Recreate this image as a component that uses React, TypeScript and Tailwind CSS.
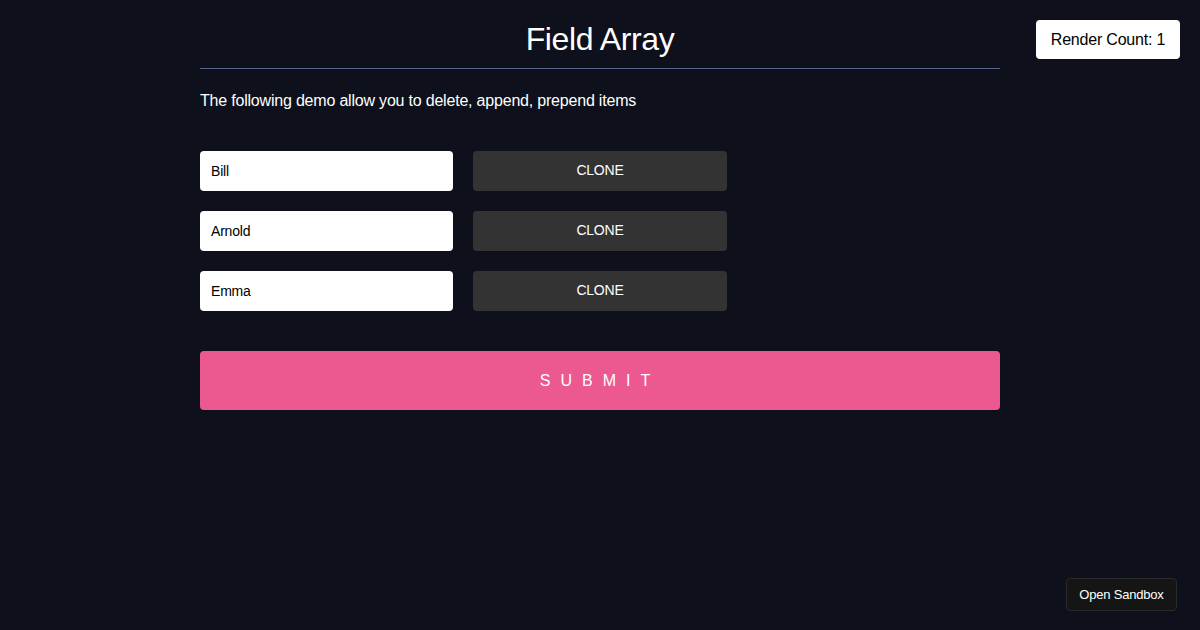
import React from "react";

export default function App() {
  const names = ["Bill", "Arnold", "Emma"];
  return (
    <div
      className="relative min-h-screen h-[630px] overflow-hidden bg-[#0e101c] text-white"
      style={{ fontFamily: '"Liberation Sans", Arial, sans-serif' }}
    >
      <div className="mx-auto w-[800px]">
        <h1 className="pt-[21px] pb-[10px] text-center text-[32px] leading-[37px] font-normal tracking-[-0.4px] border-b border-[#56638a]">
          Field Array
        </h1>
        <p className="mt-[23px] text-[16px] leading-[18px] tracking-[-0.2px] text-white">
          The following demo allow you to delete, append, prepend items
        </p>
        <form className="mt-[41px] flex flex-col">
          <ul className="flex flex-col gap-[20px]">
            {names.map((n) => (
              <li key={n} className="flex gap-[20px]">
                <input
                  defaultValue={n}
                  className="h-[40px] w-[253px] rounded-[4px] bg-white px-[11px] pb-[1px] text-[14px] tracking-[-0.2px] text-black outline-none"
                />
                <button
                  type="button"
                  className="h-[40px] w-[254px] rounded-[4px] bg-[#333333] pb-[1px] text-[14px] uppercase tracking-[-0.2px] text-white"
                >
                  Clone
                </button>
              </li>
            ))}
          </ul>
          <button
            type="button"
            className="mt-[40px] h-[59px] w-full rounded-[4px] bg-[#ec5990] text-[16px] uppercase tracking-[10px] text-white"
          >
            Submit
          </button>
        </form>
      </div>

      <div className="absolute right-[20px] top-[20px] flex h-[39px] w-[144px] items-center justify-center rounded-[4px] bg-white text-[16px] tracking-[-0.2px] text-black">
        Render Count: 1
      </div>

      <button className="absolute bottom-[19px] right-[23px] flex h-[33px] w-[111px] items-center justify-center rounded-[4px] border border-[#2a2a2a] bg-[#151515] text-[13px] tracking-[-0.2px] text-white">
        Open Sandbox
      </button>
    </div>
  );
}
